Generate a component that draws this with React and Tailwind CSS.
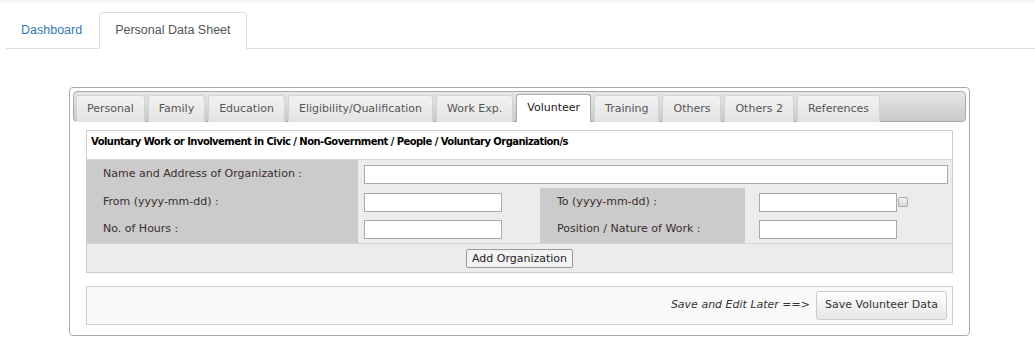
import React, { useState } from "react";

const sections = [
  "Personal",
  "Family",
  "Education",
  "Eligibility/Qualification",
  "Work Exp.",
  "Volunteer",
  "Training",
  "Others",
  "Others 2",
  "References",
];

const TextBox = ({ className = "w-[138px]" }) => (
  <input
    type="text"
    className={`h-[19px] bg-white border border-[#a9a9a9] px-1 text-[11px] outline-none ${className}`}
  />
);

const App = () => {
  const [active, setActive] = useState("Volunteer");
  const [present, setPresent] = useState(false);

  return (
    <div className="min-h-[352px] w-full bg-white font-['DejaVu_Sans',sans-serif] text-[#333]">
      <div className="h-[4px] bg-gradient-to-b from-[#f3f3f3] to-white" />

      {/* page tabs */}
      <div className="mt-[8px] ml-[6px] flex border-b border-[#ddd] font-['Liberation_Sans',Arial,sans-serif] text-[12.5px] leading-[19px]">
        <a className="px-[14px] py-[8px] -mb-px text-[#337ab7] border border-transparent rounded-t-[4px] mr-[2px] cursor-pointer">
          Dashboard
        </a>
        <a className="px-[15px] py-[8px] -mb-px text-[#555] bg-white border border-[#ddd] border-b-white rounded-t-[4px]">
          Personal Data Sheet
        </a>
      </div>

      {/* panel */}
      <div className="ml-[69px] mt-[38px] w-[901px] h-[249px] border border-[#aaa] rounded-[4px] p-[3px]">
        <div className="h-[31px] border border-[#aaa] rounded-[4px] bg-gradient-to-b from-[#e6e6e6] to-[#cacaca] flex items-end gap-[3px] pl-[2px]">
          {sections.map((s) => {
            const on = s === active;
            return (
              <button
                key={s}
                onClick={() => setActive(s)}
                className={`h-[27px] -mb-px px-[10px] text-[11px] rounded-t-[3px] border border-b-0 ${
                  on
                    ? "bg-white border-[#aaa] text-[#222] h-[28px]"
                    : "bg-gradient-to-b from-[#f2f2f2] to-[#e3e3e3] border-[#d3d3d3] text-[#555]"
                }`}
              >
                {s}
              </button>
            );
          })}
        </div>

        <div className="ml-[13px] mt-[8px] w-[867px] border border-[#ccc]">
          <div className="h-[29px] pl-[4px] pt-[3px] bg-white text-[10px] font-bold tracking-[-0.55px] text-black border-b border-[#d8d8d8]">
            Voluntary Work or Involvement in Civic / Non-Government / People / Voluntary Organization/s
          </div>

          <div className="grid grid-cols-[271px_182px_205px_1fr] grid-rows-[28px_28px_27px] text-[11px] text-[#3a2e2e]">
            <div className="bg-[#cbcbcb] pl-[16px] flex items-center">
              Name and Address of Organization :
            </div>
            <div className="col-span-3 bg-[#ececec] pl-[6px] flex items-center">
              <TextBox className="w-[584px]" />
            </div>

            <div className="bg-[#cbcbcb] pl-[16px] flex items-center">
              From (yyyy-mm-dd) :
            </div>
            <div className="bg-[#ececec] pl-[6px] flex items-center">
              <TextBox />
            </div>
            <div className="bg-[#cbcbcb] pl-[17px] flex items-center">
              To (yyyy-mm-dd) :
            </div>
            <div className="bg-[#ececec] pl-[14px] flex items-center">
              <TextBox />
              <span
                onClick={() => setPresent(!present)}
                className={`ml-px w-[10px] h-[10px] rounded-[2px] border border-[#aaa] ${
                  present ? "bg-[#777]" : "bg-gradient-to-b from-[#f4f4f4] to-[#d6d6d6]"
                }`}
              />
            </div>

            <div className="bg-[#cbcbcb] pl-[16px] flex items-center">
              No. of Hours :
            </div>
            <div className="bg-[#ececec] pl-[6px] flex items-center">
              <TextBox />
            </div>
            <div className="bg-[#cbcbcb] pl-[17px] flex items-center">
              Position / Nature of Work :
            </div>
            <div className="bg-[#ececec] pl-[14px] flex items-center">
              <TextBox />
            </div>
          </div>

          <div className="h-[29px] bg-[#ececec] border-t border-[#d5d5d5] flex items-center justify-center">
            <button className="h-[19px] px-[5px] bg-[#f3f3f3] border border-[#9a9a9a] rounded-[2px] text-[11px] text-[#222] leading-none">
              Add Organization
            </button>
          </div>
        </div>

        <div className="ml-[13px] mt-[13px] w-[867px] h-[39px] border border-[#ccc] bg-[#f9f9f9] flex items-center justify-end pr-[5px] gap-[6px]">
          <span className="italic text-[11px] text-[#333]">Save and Edit Later ==&gt;</span>
          <button className="h-[29px] w-[131px] bg-gradient-to-b from-white to-[#e6e6e6] border border-[#ccc] rounded-[3px] text-[11px] text-[#333]">
            Save Volunteer Data
          </button>
        </div>
      </div>
    </div>
  );
};

export default App;
